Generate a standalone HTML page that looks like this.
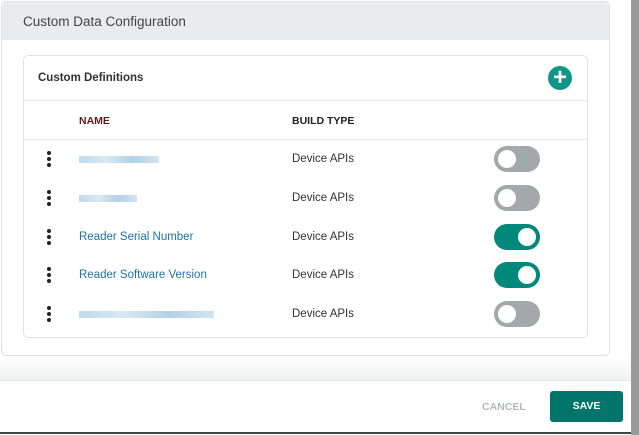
<!DOCTYPE html><html><head><style>
body{margin:0;width:639px;height:435px;background:#fff;font-family:"Liberation Sans",sans-serif;position:relative;overflow:hidden}
.abs{position:absolute}
.card{left:1px;top:1px;width:607px;height:353px;border:1px solid #dde1e2;border-radius:5px;background:#fff}
.hdr{left:2px;top:2px;width:607px;height:38px;background:#e9ecec;border-radius:5px 5px 0 0}
.inner{left:23px;top:55px;width:563px;height:281px;border:1px solid #dfe3e4;border-radius:5px}
.line{height:1px;background:#e2e6e8;left:24px;width:563px}
.dots{left:47px;width:4px}
.dots i{display:block;width:4px;height:4px;border-radius:2px;background:#222;margin-bottom:2px}
.tg{left:494px;width:46px;height:26px;border-radius:13px;background:#a3a8ab}
.tg b{position:absolute;top:4px;left:4px;width:18px;height:18px;border-radius:9px;background:#fff}
.tg.on{background:#00897b}.tg.on b{left:24px}
.nm{left:79px;font-size:11.5px;color:#1b74a8}
.bt{left:292px;font-size:11.5px;color:#333}
.blur{left:79px;height:7px;background:linear-gradient(90deg,#b9d5ea,#d6e6f2,#a9cbe4,#cfe1ef);opacity:.9}
</style></head><body>
<div class="abs card"></div>
<div class="abs hdr"></div>
<div class="abs" style="left:23px;top:14px;font-size:13.5px;color:#444">Custom Data Configuration</div>
<div class="abs inner"></div>
<div class="abs" style="left:38px;top:72px;font-size:11.5px;font-weight:bold;color:#333">Custom Definitions</div>
<div class="abs" style="left:548px;top:66px;width:24px;height:24px;border-radius:12px;background:#0f9688;color:#fff;font-size:24px;line-height:23px;text-align:center;font-weight:bold">+</div>
<div class="abs line" style="top:100px"></div>
<div class="abs" style="left:79px;top:115px;font-size:10.5px;font-weight:bold;color:#5a1a1a">NAME</div>
<div class="abs" style="left:292px;top:115px;font-size:10.5px;font-weight:bold;color:#222">BUILD TYPE</div>
<div class="abs line" style="top:139px"></div>

<div class="abs dots" style="top:151px"><i></i><i></i><i></i></div>
<div class="abs blur" style="top:156px;width:80px"></div>
<div class="abs bt" style="top:153px">Device APIs</div>
<div class="abs tg" style="top:146px"><b></b></div>

<div class="abs dots" style="top:190px"><i></i><i></i><i></i></div>
<div class="abs blur" style="top:195px;width:58px"></div>
<div class="abs bt" style="top:192px">Device APIs</div>
<div class="abs tg" style="top:185px"><b></b></div>

<div class="abs dots" style="top:229px"><i></i><i></i><i></i></div>
<div class="abs nm" style="top:231px">Reader Serial Number</div>
<div class="abs bt" style="top:231px">Device APIs</div>
<div class="abs tg on" style="top:224px"><b></b></div>

<div class="abs dots" style="top:267px"><i></i><i></i><i></i></div>
<div class="abs nm" style="top:269px">Reader Software Version</div>
<div class="abs bt" style="top:269px">Device APIs</div>
<div class="abs tg on" style="top:262px"><b></b></div>

<div class="abs dots" style="top:306px"><i></i><i></i><i></i></div>
<div class="abs blur" style="top:311px;width:135px"></div>
<div class="abs bt" style="top:308px">Device APIs</div>
<div class="abs tg" style="top:301px"><b></b></div>

<div class="abs" style="left:0;top:356px;width:631px;height:24px;background:linear-gradient(#fff,#f0f1f1)"></div>
<div class="abs" style="left:0;top:380px;width:631px;height:1px;background:#e4e6e7"></div>
<div class="abs" style="left:631px;top:0;width:8px;height:435px;background:#9a9a9a"></div>
<div class="abs" style="left:0;top:432px;width:631px;height:2px;background:#444"></div>
<div class="abs" style="left:482px;top:401px;font-size:10.5px;font-weight:bold;color:#b5b8ba">CANCEL</div>
<div class="abs" style="left:550px;top:391px;width:73px;height:31px;border-radius:3px;background:#00756b;color:#fff;font-size:10.5px;font-weight:bold;text-align:center;line-height:31px">SAVE</div>
</body></html>
